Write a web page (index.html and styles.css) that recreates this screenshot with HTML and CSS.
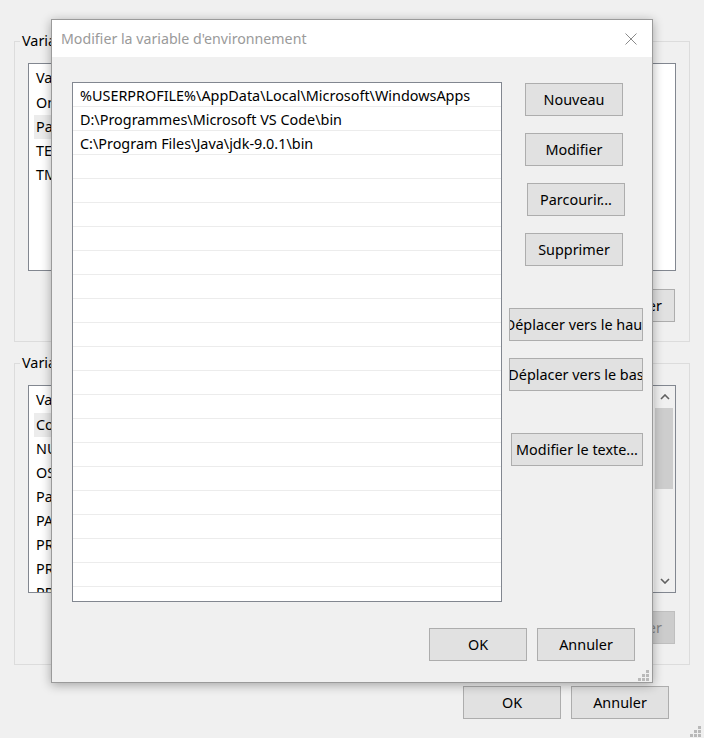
FILE: index.html
```html
<!DOCTYPE html>
<html lang="fr">
<head>
<meta charset="utf-8">
<title>Modifier la variable d'environnement</title>
<link rel="stylesheet" href="styles.css">
</head>
<body>
<div class="window">
  <fieldset class="group group-user">
    <legend>Variables utilisateur pour Utilisateur</legend>
    <div class="listview">
      <div class="lv-body">
        <div class="lv-row lv-head"><span class="c1">Variable</span><span class="c2">Valeur</span></div>
        <div class="lv-row"><span class="c1">OneDrive</span><span class="c2">C:\Users\Utilisateur\OneDrive</span></div>
        <div class="lv-row is-sel"><span class="c1">Path</span><span class="c2">%USERPROFILE%\AppData\Local\Microsoft\WindowsApps;D:\Programmes\...</span></div>
        <div class="lv-row"><span class="c1">TEMP</span><span class="c2">%USERPROFILE%\AppData\Local\Temp</span></div>
        <div class="lv-row"><span class="c1">TMP</span><span class="c2">%USERPROFILE%\AppData\Local\Temp</span></div>
      </div>
    </div>
    <div class="actions">
      <button class="btn"><span>Nouvelle...</span></button>
      <button class="btn"><span>Modifier...</span></button>
      <button class="btn"><span>Supprimer</span></button>
    </div>
  </fieldset>

  <fieldset class="group group-sys">
    <legend>Variables système</legend>
    <div class="listview has-scroll">
      <div class="lv-body">
        <div class="lv-row lv-head"><span class="c1">Variable</span><span class="c2">Valeur</span></div>
        <div class="lv-row is-sel"><span class="c1">ComSpec</span><span class="c2">C:\WINDOWS\system32\cmd.exe</span></div>
        <div class="lv-row"><span class="c1">NUMBER_OF_PROCESSORS</span><span class="c2">4</span></div>
        <div class="lv-row"><span class="c1">OS</span><span class="c2">Windows_NT</span></div>
        <div class="lv-row"><span class="c1">Path</span><span class="c2">C:\WINDOWS\system32;C:\WINDOWS;...</span></div>
        <div class="lv-row"><span class="c1">PATHEXT</span><span class="c2">.COM;.EXE;.BAT;.CMD;.VBS;.VBE;.JS;.JSE;.WSF;.WSH;.MSC</span></div>
        <div class="lv-row"><span class="c1">PROCESSOR_ARCHITECTURE</span><span class="c2">AMD64</span></div>
        <div class="lv-row"><span class="c1">PROCESSOR_IDENTIFIER</span><span class="c2">Intel64 Family 6 Model 142</span></div>
        <div class="lv-row"><span class="c1">PROCESSOR_LEVEL</span><span class="c2">6</span></div>
      </div>
      <div class="scrollbar">
        <span class="sb-arrow"><svg width="10" height="6" viewBox="0 0 10 6"><polyline points="1,5 5,1 9,5" fill="none" stroke="#606060" stroke-width="1.6"/></svg></span>
        <span class="sb-track"><span class="sb-thumb"></span></span>
        <span class="sb-arrow"><svg width="10" height="6" viewBox="0 0 10 6"><polyline points="1,1 5,5 9,1" fill="none" stroke="#606060" stroke-width="1.6"/></svg></span>
      </div>
    </div>
    <div class="actions">
      <button class="btn"><span>Nouvelle...</span></button>
      <button class="btn"><span>Modifier...</span></button>
      <button class="btn" disabled><span>Supprimer</span></button>
    </div>
  </fieldset>

  <div class="actions main-actions">
    <button class="btn"><span>OK</span></button>
    <button class="btn"><span>Annuler</span></button>
  </div>

  <svg class="grip window-grip" width="11" height="11" viewBox="0 0 11 11">
    <rect x="8" y="0" width="3" height="3"/>
    <rect x="4" y="4" width="3" height="3"/><rect x="8" y="4" width="3" height="3"/>
    <rect x="0" y="8" width="3" height="3"/><rect x="4" y="8" width="3" height="3"/><rect x="8" y="8" width="3" height="3"/>
  </svg>
</div>

<div class="dialog">
  <div class="titlebar">
    <span class="title">Modifier la variable d'environnement</span>
    <svg class="close" width="12" height="12" viewBox="0 0 12 12"><path d="M0.5 0.5 L11.5 11.5 M11.5 0.5 L0.5 11.5" stroke="#8a8a8a" stroke-width="1" fill="none"/></svg>
  </div>
  <div class="dialog-body">
    <div class="path-list">
      <div class="pl-row">%USERPROFILE%\AppData\Local\Microsoft\WindowsApps</div>
      <div class="pl-row">D:\Programmes\Microsoft VS Code\bin</div>
      <div class="pl-row">C:\Program Files\Java\jdk-9.0.1\bin</div>
      <div class="pl-row"></div><div class="pl-row"></div><div class="pl-row"></div>
      <div class="pl-row"></div><div class="pl-row"></div><div class="pl-row"></div>
      <div class="pl-row"></div><div class="pl-row"></div><div class="pl-row"></div>
      <div class="pl-row"></div><div class="pl-row"></div><div class="pl-row"></div>
      <div class="pl-row"></div><div class="pl-row"></div><div class="pl-row"></div>
      <div class="pl-row"></div><div class="pl-row"></div><div class="pl-row"></div>
      <div class="pl-row"></div>
    </div>
    <div class="side">
      <button class="btn b-new"><span>Nouveau</span></button>
      <button class="btn b-edit"><span>Modifier</span></button>
      <button class="btn b-browse"><span>Parcourir...</span></button>
      <button class="btn b-del"><span>Supprimer</span></button>
      <button class="btn wide b-up"><span>Déplacer vers le haut</span></button>
      <button class="btn wide b-down"><span>Déplacer vers le bas</span></button>
      <button class="btn wide b-text"><span>Modifier le texte...</span></button>
    </div>
    <div class="dialog-footer">
      <button class="btn"><span>OK</span></button>
      <button class="btn"><span>Annuler</span></button>
    </div>
    <svg class="grip dialog-grip" width="11" height="11" viewBox="0 0 11 11">
      <rect x="8" y="0" width="3" height="3"/>
      <rect x="4" y="4" width="3" height="3"/><rect x="8" y="4" width="3" height="3"/>
      <rect x="0" y="8" width="3" height="3"/><rect x="4" y="8" width="3" height="3"/><rect x="8" y="8" width="3" height="3"/>
    </svg>
  </div>
</div>
</body>
</html>
```

FILE: styles.css
```css
* { box-sizing: border-box; }

html, body {
  margin: 0;
  width: 704px;
  height: 738px;
  overflow: hidden;
}

body {
  position: relative;
  background: #f0f0f0;
  font-family: "Noto Sans", "Open Sans", sans-serif;
  font-size: 14.4px;
  color: #000;
}

/* ---------- back window ---------- */
.window {
  position: relative;
  height: 738px;
  padding: 31px 14px 0;
}

.group {
  margin: 0;
  min-width: 0;
  border: 1px solid #dcdcdc;
  padding: 12px 13px 19px;
}

.group-sys {
  margin-top: 11px;
  padding-bottom: 20px;
}

.group legend {
  padding: 0 2px;
  margin-left: -8px;
  height: 20px;
  line-height: 20px;
  white-space: nowrap;
}

.listview {
  display: flex;
  height: 208px;
  border: 1px solid #828790;
  background: #fff;
  overflow: hidden;
}

.lv-body {
  flex: 1;
  min-width: 0;
  padding-left: 5px;
}

.lv-row {
  display: flex;
  height: 24px;
  line-height: 24px;
  white-space: nowrap;
}

.lv-head {
  height: 27px;
  line-height: 27px;
}

.c1 {
  width: 210px;
  flex: none;
  padding-left: 2px;
}

.lv-row.is-sel .c1 {
  background: #ececec;
}

.c2 {
  flex: none;
  max-width: 360px;
  padding-left: 4px;
  overflow: hidden;
  text-overflow: ellipsis;
}

.scrollbar {
  width: 21px;
  flex: none;
  display: flex;
  flex-direction: column;
  background: #f0f0f0;
}

.sb-arrow {
  height: 22px;
  display: flex;
  align-items: center;
  justify-content: center;
}

.sb-track {
  flex: 1;
  padding: 0 2px 0 1px;
}

.sb-thumb {
  display: block;
  height: 81px;
  background: #cdcdcd;
}

.actions {
  display: flex;
  justify-content: flex-end;
  gap: 10px;
  margin-top: 18px;
  padding-right: 1px;
}

.main-actions {
  margin-top: 21px;
  padding-right: 21px;
}

.btn {
  display: flex;
  align-items: center;
  justify-content: center;
  width: 98px;
  height: 33px;
  margin: 0;
  padding: 0;
  border: 1px solid #adadad;
  background: #e1e1e1;
  color: #000;
  font: inherit;
  white-space: nowrap;
  overflow: hidden;
}

.btn span { flex: none; }

.btn:disabled {
  background: #cccccc;
  border-color: #bfbfbf;
  color: #838383;
}

.grip {
  position: absolute;
  fill: #b9b9b9;
}

.window-grip {
  right: 3px;
  bottom: 1px;
}

/* ---------- dialog ---------- */
.dialog {
  position: absolute;
  left: 51px;
  top: 19px;
  width: 602px;
  height: 664px;
  display: flex;
  flex-direction: column;
  border: 1px solid #9a9a9a;
  background: #f0f0f0;
  box-shadow: 0 2px 10px rgba(0, 0, 0, 0.32);
}

.titlebar {
  height: 37px;
  flex: none;
  display: flex;
  align-items: center;
  padding-left: 9px;
  background: #fff;
  color: #9a9a9a;
  font-size: 14.2px;
}

.close {
  margin-left: auto;
  margin-right: 15px;
}

.dialog-body {
  position: relative;
  flex: 1;
  display: grid;
  grid-template-columns: 430px minmax(0, 1fr);
  grid-template-rows: 520px auto;
  row-gap: 26px;
  padding: 25px 17px 21px 20px;
}

.path-list {
  border: 1px solid #828790;
  background: #fff;
  overflow: hidden;
}

.pl-row {
  height: 24px;
  line-height: 23px;
  padding: 1px 0 0 7px;
  border-bottom: 1px solid #ececec;
  white-space: nowrap;
}

.side {
  display: flex;
  flex-direction: column;
  align-items: flex-start;
  min-width: 0;
}

.side .btn { flex: none; }
.side .wide { width: 134px; }

.b-new { margin: 1px 0 0 23px; }
.b-edit { margin: 17px 0 0 23px; }
.b-browse { margin: 17px 0 0 25px; }
.b-del { margin: 17px 0 0 23px; }
.b-up { margin: 42px 0 0 7px; }
.b-down { margin: 17px 0 0 7px; }
.side .b-text { margin: 42px 0 0 9px; width: 132px; }

.dialog-footer {
  grid-column: 1 / -1;
  display: flex;
  justify-content: flex-end;
  gap: 10px;
}

.dialog-grip {
  right: 3px;
  bottom: 1px;
}
```
